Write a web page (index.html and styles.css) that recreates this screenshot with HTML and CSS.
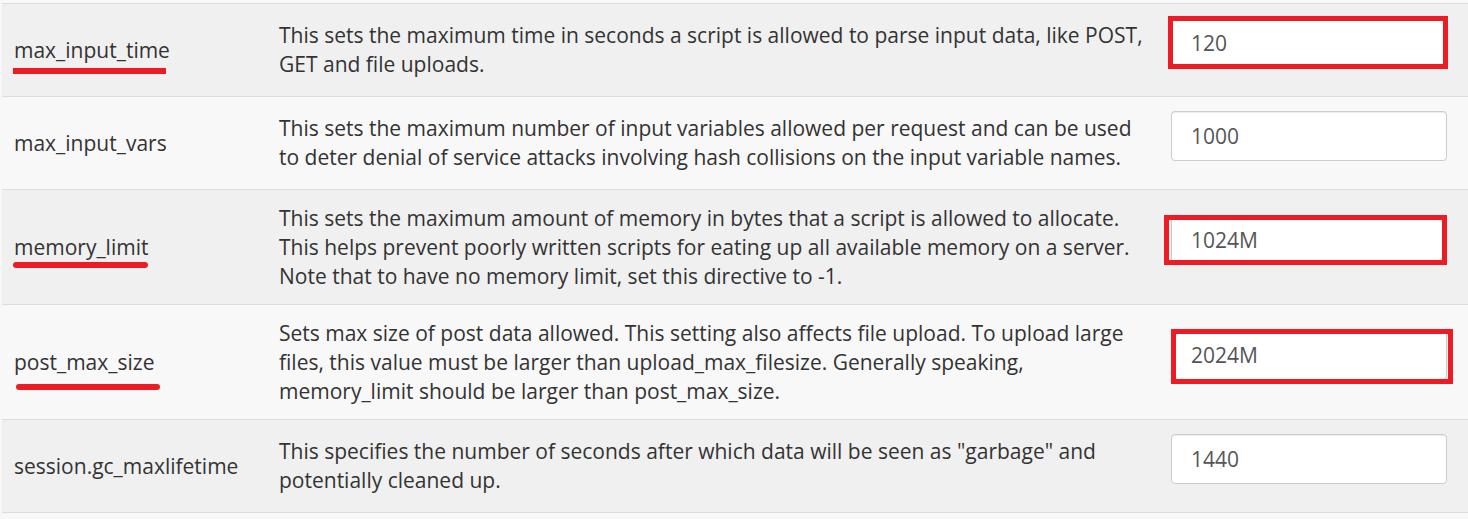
FILE: index.html
```html
<!DOCTYPE html>
<html lang="en">
<head>
  <meta charset="UTF-8" />
  <title>PHP Options</title>
  <link rel="stylesheet" href="styles.css">
</head>
<body>
  <div class="settings">
    <div class="row">
      <div class="name"><span class="label">max_input_time<i class="line line-a"></i></span></div>
      <div class="desc">This sets the maximum time in seconds a script is allowed to parse input data, like POST, GET and file uploads.</div>
      <div class="field">
        <input type="text" value="120" />
        <i class="box box-a"></i>
      </div>
    </div>

    <div class="row">
      <div class="name"><span class="label">max_input_vars</span></div>
      <div class="desc">This sets the maximum number of input variables allowed per request and can be used to deter denial of service attacks involving hash collisions on the input variable names.</div>
      <div class="field">
        <input type="text" value="1000" />
      </div>
    </div>

    <div class="row">
      <div class="name"><span class="label">memory_limit<i class="line line-b"></i></span></div>
      <div class="desc">This sets the maximum amount of memory in bytes that a script is allowed to allocate. This helps prevent poorly written scripts for eating up all available memory on a server. Note that to have no memory limit, set this directive to -1.</div>
      <div class="field">
        <input type="text" value="1024M" />
        <i class="box box-b"></i>
      </div>
    </div>

    <div class="row">
      <div class="name"><span class="label">post_max_size<i class="line line-c"></i></span></div>
      <div class="desc">Sets max size of post data allowed. This setting also affects file upload. To upload large files, this value must be larger than upload_max_filesize. Generally speaking, memory_limit should be larger than post_max_size.</div>
      <div class="field">
        <input type="text" value="2024M" />
        <i class="box box-c"></i>
      </div>
    </div>

    <div class="row">
      <div class="name"><span class="label">session.gc_maxlifetime</span></div>
      <div class="desc">This specifies the number of seconds after which data will be seen as "garbage" and potentially cleaned up.</div>
      <div class="field">
        <input type="text" value="1440" />
      </div>
    </div>
  </div>
</body>
</html>
```

FILE: styles.css
```css
body {
  margin: 0;
  background: #f8f8f8;
  font-family: "Open Sans", Arial, sans-serif;
  font-size: 21px;
  line-height: 29px;
  color: #333;
}

.settings {
  margin: 3px 0 0 2px;
  border-top: 1px solid #ddd;
}

.row {
  display: grid;
  grid-template-columns: 277px 872px 297px;
  align-items: center;
  padding: 13.5px 0;
  border-bottom: 1px solid #ddd;
  background: #f8f8f8;
}

.row:nth-child(odd) {
  background: #f0f0f0;
}

.name {
  padding-left: 12px;
}

.label {
  position: relative;
  display: inline-block;
}

.field {
  position: relative;
  margin-left: 20px;
  width: 276px;
  height: 50px;
  margin-bottom: 15px;
}

.field input {
  box-sizing: border-box;
  width: 100%;
  height: 100%;
  padding: 0 19px;
  border: 1px solid #ccc;
  border-radius: 4px;
  background: #fff;
  box-shadow: inset 0 1px 1px rgba(0, 0, 0, 0.075);
  font-family: "Open Sans", Arial, sans-serif;
  font-size: 21px;
  color: #555;
}

/* red annotation marks */
.line {
  position: absolute;
  height: 6px;
  background: #ed1c24;
}

.line-a {
  left: -1px;
  width: 153px;
  bottom: -9px;
}

.line-b {
  left: -1px;
  width: 135px;
  bottom: -6px;
  border-radius: 3px;
}

.line-c {
  left: 2px;
  width: 144px;
  bottom: -13px;
  border-radius: 3px;
}

.box {
  position: absolute;
  border: 5px solid #ed1c24;
}

.box-a {
  left: -3px;
  right: -1px;
  top: -2px;
  bottom: -1px;
}

.box-b {
  left: -7px;
  right: 0;
  top: 0;
  bottom: 0;
}

.box-c {
  left: 0;
  right: -6px;
  top: -1px;
  bottom: -4px;
}
```
